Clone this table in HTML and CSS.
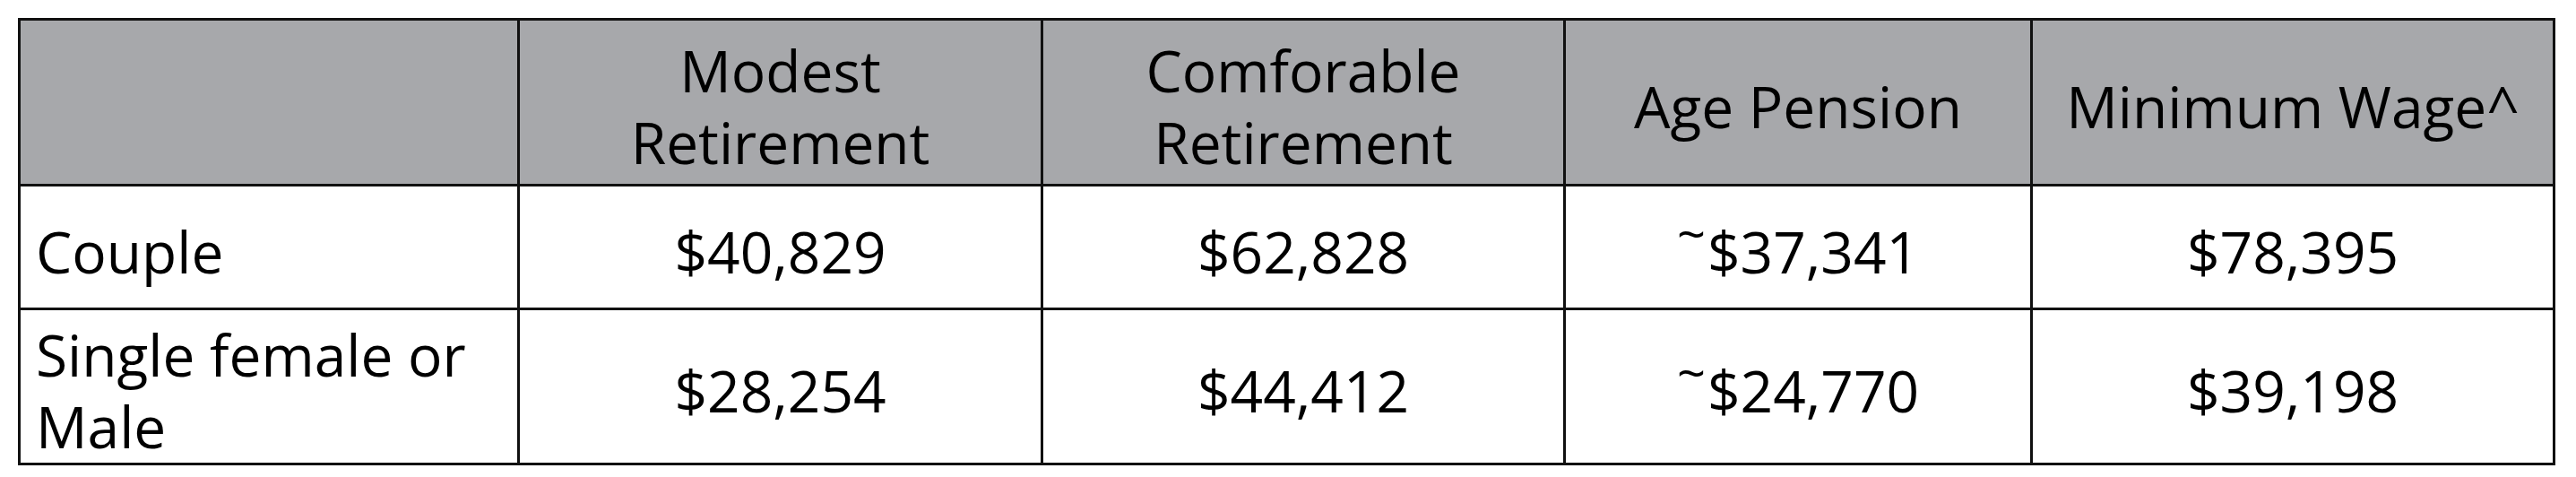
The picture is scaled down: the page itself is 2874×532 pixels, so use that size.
FILE: index.html
```html
<!DOCTYPE html>
<html lang="en">
<head>
<meta charset="utf-8">
<title>Retirement standards</title>
<link rel="stylesheet" href="styles.css">
</head>
<body>
<div class="wrap">
<table class="grid">
  <colgroup>
    <col class="c1"><col class="c2"><col class="c3"><col class="c4"><col class="c5">
  </colgroup>
  <thead>
    <tr class="head">
      <th></th>
      <th>Modest<br>Retirement</th>
      <th>Comforable<br>Retirement</th>
      <th>Age Pension</th>
      <th>Minimum Wage^</th>
    </tr>
  </thead>
  <tbody>
    <tr class="r1">
      <td class="label">Couple</td>
      <td>$40,829</td>
      <td>$62,828</td>
      <td><span class="tilde">~</span>$37,341</td>
      <td>$78,395</td>
    </tr>
    <tr class="r2">
      <td class="label">Single female or<br>Male</td>
      <td>$28,254</td>
      <td>$44,412</td>
      <td><span class="tilde">~</span>$24,770</td>
      <td>$39,198</td>
    </tr>
  </tbody>
</table>
</div>
</body>
</html>
```

FILE: styles.css
```css
html, body {
  margin: 0;
  padding: 0;
  background: #ffffff;
}
.wrap {
  padding: 20px 0 0 20px;
}
.grid {
  border-collapse: collapse;
  table-layout: fixed;
  width: 2828px;
  font-family: "Open Sans", "Noto Sans", sans-serif;
  font-size: 64px;
  line-height: 80px;
  color: #000;
}
.c1 { width: 557px; }
.c2 { width: 584px; }
.c3 { width: 583px; }
.c4 { width: 521px; }
.c5 { width: 583px; }
.grid th, .grid td {
  border: 3px solid #111;
  text-align: center;
  vertical-align: middle;
  padding: 10px 0 0 0;
  font-weight: 400;
}
.head th {
  background: #a7a8ab;
  height: 172px;
}
.r1 td { height: 125px; }
.r2 td { height: 155px; }
.grid td.label {
  text-align: left;
  padding-left: 17px;
}
.tilde {
  font-size: 56px;
  line-height: 0;
  vertical-align: 24px;
  margin-right: 2px;
}
```
